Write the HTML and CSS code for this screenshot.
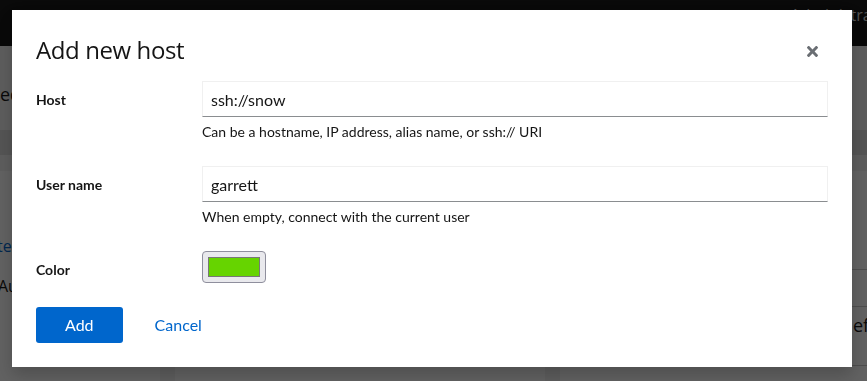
FILE: index.html
```html
<!DOCTYPE html>
<html lang="en">
<head>
<meta charset="utf-8">
<title>Add new host</title>
<link rel="stylesheet" href="styles.css">
</head>
<body>
<div class="page">
  <header class="topbar">
    <span class="admin">Administrative access</span>
  </header>
  <div class="content">
    <div class="lead-row"><span class="frag">ed</span></div>
    <div class="band"></div>
    <div class="cards">
      <div class="card side">
        <div class="side-link">te</div>
        <div class="side-text">Au</div>
      </div>
      <div class="card main"></div>
      <div class="card right">
        <div class="r-row"></div>
        <div class="r-row text">ef9</div>
      </div>
    </div>
  </div>
</div>

<div class="backdrop">
  <div class="modal" role="dialog" aria-labelledby="modal-title">
    <div class="modal-header">
      <h1 id="modal-title" class="modal-title">Add new host</h1>
      <button class="close-btn" aria-label="Close">
        <svg viewBox="0 80 352 352" width="11" height="11" aria-hidden="true"><path fill="#6a6e73" d="M242.72 256l100.07-100.07c12.28-12.28 12.28-32.19 0-44.48l-22.24-22.24c-12.28-12.28-32.19-12.28-44.48 0L176 189.28 75.93 89.21c-12.28-12.28-32.19-12.28-44.48 0L9.21 111.45c-12.28 12.28-12.28 32.19 0 44.48L109.28 256 9.21 356.07c-12.28 12.28-12.28 32.19 0 44.48l22.24 22.24c12.28 12.28 32.2 12.28 44.48 0L176 322.72l100.07 100.07c12.28 12.28 32.2 12.28 44.48 0l22.24-22.24c12.28-12.28 12.28-32.19 0-44.48L242.72 256z"/></svg>
      </button>
    </div>
    <form class="form">
      <label class="form-label" for="host">Host</label>
      <div class="form-control-group">
        <input id="host" class="text-input" type="text" value="ssh://snow">
        <div class="helper">Can be a hostname, IP address, alias name, or ssh:// URI</div>
      </div>

      <label class="form-label" for="user">User name</label>
      <div class="form-control-group">
        <input id="user" class="text-input" type="text" value="garrett">
        <div class="helper">When empty, connect with the current user</div>
      </div>

      <label class="form-label" for="color">Color</label>
      <div class="form-control-group">
        <button type="button" id="color" class="swatch"><span class="swatch-fill"></span></button>
      </div>
    </form>
    <div class="actions">
      <button class="btn-primary">Add</button>
      <button class="btn-link">Cancel</button>
    </div>
  </div>
</div>
</body>
</html>
```

FILE: styles.css
```css
* { box-sizing: border-box; }

html, body {
  margin: 0;
  padding: 0;
  height: 100%;
  overflow: hidden;
}

body {
  font-family: "Lato", "Noto Sans", sans-serif;
  color: #151515;
  background: #f0f0f0;
}

/* ---------- underlying page ---------- */
.page {
  height: 100%;
  display: flex;
  flex-direction: column;
  overflow: hidden;
}

.topbar {
  height: 46px;
  background: #151515;
  display: flex;
  justify-content: flex-end;
  align-items: flex-start;
  padding-top: 4px;
  flex-shrink: 0;
  overflow: hidden;
}

.admin {
  color: #d2d2d2;
  font-family: "Open Sans", sans-serif;
  font-size: 16px;
  white-space: nowrap;
  margin-right: -84px;
}

.content {
  flex: 1;
  display: flex;
  flex-direction: column;
  min-height: 0;
}

.lead-row {
  height: 84px;
  padding-top: 36px;
  font-family: "Open Sans", sans-serif;
  font-size: 18px;
  color: #151515;
  white-space: nowrap;
}

.band {
  height: 25px;
  background: #dadada;
  flex-shrink: 0;
}

.cards {
  flex: 1;
  min-height: 0;
  display: grid;
  grid-template-columns: 160px 370px 1fr;
  column-gap: 15px;
  padding-top: 16px;
  overflow: hidden;
}

.card { background: #fbfbfb; }

.side {
  padding-top: 64px;
  font-family: "Open Sans", sans-serif;
  font-size: 16px;
  overflow: hidden;
}

.side-link {
  color: #0066cc;
  text-indent: -3px;
  height: 40px;
}

.side-text {
  color: #151515;
  text-indent: -2px;
}

.right {
  padding-top: 98px;
  overflow: hidden;
}

.r-row {
  height: 37px;
  border-top: 1px solid #c8c8c8;
}

.r-row.text {
  font-family: "Open Sans", sans-serif;
  font-size: 18px;
  padding-left: 293px;
  padding-top: 6px;
  color: #151515;
  border-bottom: 1px solid #c8c8c8;
  height: 60px;
}

/* ---------- backdrop + modal ---------- */
.backdrop {
  position: fixed;
  inset: 0;
  background: rgba(3, 3, 3, 0.62);
  display: flex;
  align-items: flex-start;
  padding: 10px 0 0 12px;
}

.modal {
  width: 840px;
  background: #ffffff;
  padding: 24px;
  box-shadow: 0 8px 16px rgba(0,0,0,0.2);
}

.modal-header {
  display: flex;
  align-items: center;
  justify-content: space-between;
  margin-bottom: 16px;
}

.modal-title {
  margin: 0;
  font-family: "Open Sans", "Lato", sans-serif;
  font-weight: 400;
  font-size: 24px;
  line-height: 31px;
  letter-spacing: -0.4px;
  color: #151515;
}

.close-btn {
  border: 0;
  background: transparent;
  padding: 0;
  margin: 4px 10px 0 0;
  width: 11px;
  height: 11px;
  display: flex;
  cursor: pointer;
}

.form {
  display: grid;
  grid-template-columns: 150px 1fr;
  column-gap: 16px;
  row-gap: 24px;
  margin: 0;
}

.form-label {
  font-weight: 700;
  font-size: 14px;
  line-height: 21px;
  padding-top: 8px;
  color: #151515;
}

.form-control-group {
  display: flex;
  flex-direction: column;
  align-items: flex-start;
}

.text-input {
  width: 100%;
  height: 36px;
  border: 1px solid #f0f0f0;
  border-bottom-color: #8a8d90;
  padding: 6px 8px;
  font-family: "Lato", "Noto Sans", sans-serif;
  font-size: 16px;
  color: #151515;
  background: #fff;
  outline: none;
}

.helper {
  margin-top: 4px;
  font-size: 14px;
  line-height: 21px;
  color: #151515;
}

.swatch {
  width: 64px;
  height: 32px;
  padding: 5px;
  border: 1px solid #8f8f9d;
  border-radius: 4px;
  background: #e9e9ed;
  display: flex;
}

.swatch-fill {
  flex: 1;
  background: #66d400;
  border: 1px solid #777777;
}

.actions {
  display: flex;
  gap: 16px;
  margin-top: 24px;
}

.btn-primary {
  height: 36px;
  padding: 6px 29px;
  border: 0;
  border-radius: 3px;
  background: #0066cc;
  color: #ffffff;
  font-family: "Lato", "Noto Sans", sans-serif;
  font-size: 16px;
  line-height: 24px;
}

.btn-link {
  height: 36px;
  padding: 6px 16px;
  border: 0;
  background: transparent;
  color: #0066cc;
  font-family: "Lato", "Noto Sans", sans-serif;
  font-size: 16px;
  line-height: 24px;
}
```
